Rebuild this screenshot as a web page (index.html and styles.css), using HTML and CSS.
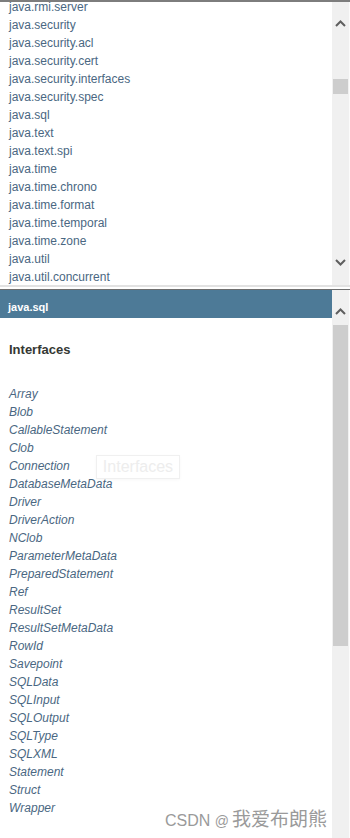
FILE: index.html
```html
<!DOCTYPE html>
<html lang="en">
<head>
<meta charset="utf-8">
<title>java.sql</title>
<link rel="stylesheet" href="styles.css">
</head>
<body>
<div class="page">
  <div class="frame frame-top">
    <div class="pane">
      <ul class="pkg-list">
        <li><a>java.rmi.server</a></li>
        <li><a>java.security</a></li>
        <li><a>java.security.acl</a></li>
        <li><a>java.security.cert</a></li>
        <li><a>java.security.interfaces</a></li>
        <li><a>java.security.spec</a></li>
        <li><a>java.sql</a></li>
        <li><a>java.text</a></li>
        <li><a>java.text.spi</a></li>
        <li><a>java.time</a></li>
        <li><a>java.time.chrono</a></li>
        <li><a>java.time.format</a></li>
        <li><a>java.time.temporal</a></li>
        <li><a>java.time.zone</a></li>
        <li><a>java.util</a></li>
        <li><a>java.util.concurrent</a></li>
      </ul>
    </div>
    <div class="scrollbar">
      <div class="sb-btn sb-up"><svg width="11" height="7" viewBox="0 0 11 7"><polyline points="1,6 5.5,1.5 10,6" fill="none" stroke="#5f5f5f" stroke-width="2"/></svg></div>
      <div class="sb-thumb sb-thumb-top"></div>
      <div class="sb-btn sb-down"><svg width="11" height="7" viewBox="0 0 11 7"><polyline points="1,1 5.5,5.5 10,1" fill="none" stroke="#5f5f5f" stroke-width="2"/></svg></div>
    </div>
  </div>
  <div class="divider"></div>
  <div class="frame frame-bottom">
    <div class="pane">
      <h1 class="bar">java.sql</h1>
      <h2 class="section-title">Interfaces</h2>
      <ul class="type-list">
        <li><a>Array</a></li>
        <li><a>Blob</a></li>
        <li><a>CallableStatement</a></li>
        <li><a>Clob</a></li>
        <li><a>Connection</a></li>
        <li><a>DatabaseMetaData</a></li>
        <li><a>Driver</a></li>
        <li><a>DriverAction</a></li>
        <li><a>NClob</a></li>
        <li><a>ParameterMetaData</a></li>
        <li><a>PreparedStatement</a></li>
        <li><a>Ref</a></li>
        <li><a>ResultSet</a></li>
        <li><a>ResultSetMetaData</a></li>
        <li><a>RowId</a></li>
        <li><a>Savepoint</a></li>
        <li><a>SQLData</a></li>
        <li><a>SQLInput</a></li>
        <li><a>SQLOutput</a></li>
        <li><a>SQLType</a></li>
        <li><a>SQLXML</a></li>
        <li><a>Statement</a></li>
        <li><a>Struct</a></li>
        <li><a>Wrapper</a></li>
      </ul>
      <div class="ghost-tip">Interfaces</div>
    </div>
    <div class="scrollbar">
      <div class="sb-btn sb-up"><svg width="11" height="7" viewBox="0 0 11 7"><polyline points="1,6 5.5,1.5 10,6" fill="none" stroke="#5f5f5f" stroke-width="2"/></svg></div>
      <div class="sb-thumb sb-thumb-bottom"></div>
    </div>
  </div>
  <div class="watermark">CSDN <span class="wm-at">@</span><span class="wm-cjk">我爱布朗熊</span></div>
</div>
</body>
</html>
```
FILE: styles.css
```css
html, body {
  margin: 0;
  padding: 0;
  background: #ffffff;
}

body {
  width: 350px;
  height: 838px;
  overflow: hidden;
  font-family: "Liberation Sans", Arial, sans-serif;
}

.page {
  position: relative;
  width: 350px;
  height: 838px;
  display: flex;
  flex-direction: column;
}

.frame {
  display: flex;
  width: 350px;
}

.frame-top {
  height: 283px;
  border-top: 2px solid #7d7d7d;
  border-bottom: 2px solid #e2e2e2;
}

.divider {
  height: 2px;
  background: #ffffff;
  border-bottom: 1px solid #6e6e6e;
}

.frame-bottom {
  height: 548px;
}

.pane {
  position: relative;
  width: 332px;
  overflow: hidden;
}

.scrollbar {
  width: 17px;
  border-right: 1px solid #fbfbfb;
  background: #f0f0f0;
  display: flex;
  flex-direction: column;
}

.sb-btn {
  height: 35px;
  display: flex;
  justify-content: center;
  box-sizing: border-box;
}

.sb-up {
  align-items: flex-start;
  padding-top: 18px;
}

.sb-down {
  margin-top: auto;
  align-items: flex-end;
  padding-bottom: 19px;
}

.sb-thumb {
  margin: 0 1px;
  background: #cdcdcd;
}

.sb-thumb-top {
  margin-top: 42px;
  height: 15px;
}

.sb-thumb-bottom {
  height: 321px;
}

ul {
  list-style: none;
  margin: 0;
  padding: 0;
}

a {
  color: #4a6782;
  text-decoration: none;
}

.pkg-list {
  margin-top: -4px;
  padding-left: 9px;
  font-size: 12px;
  line-height: 18px;
}

.bar {
  margin: 0;
  height: 28px;
  box-sizing: border-box;
  padding: 10px 0 0 8px;
  background: #4d7a97;
  color: #ffffff;
  font-size: 11px;
  line-height: 14px;
  font-weight: bold;
}

.section-title {
  margin: 24px 0 0;
  padding-left: 9px;
  font-size: 13px;
  line-height: 16px;
  font-weight: bold;
  color: #353833;
}

.type-list {
  margin-top: 27px;
  padding-left: 9px;
  font-size: 12px;
  line-height: 18px;
  font-style: italic;
}

.ghost-tip {
  position: absolute;
  left: 96px;
  top: 165px;
  width: 84px;
  height: 24px;
  box-sizing: border-box;
  border: 1px solid #f0f0f0;
  color: #ededed;
  font-size: 16px;
  line-height: 22px;
  text-align: center;
  box-shadow: 0 1px 3px rgba(0, 0, 0, 0.03);
}

.watermark {
  position: absolute;
  left: 165px;
  top: 807px;
  font-family: "Liberation Sans", "Noto Sans CJK SC", sans-serif;
  font-size: 16px;
  line-height: 22px;
  color: #9a9a9a;
  white-space: nowrap;
  text-shadow: 0 0 1px #ffffff, 0 0 2px #ffffff;
}

.wm-at {
  font-size: 14px;
}

.wm-cjk {
  font-family: "Noto Sans CJK SC", sans-serif;
  font-size: 19px;
  margin-left: 3px;
}
```
